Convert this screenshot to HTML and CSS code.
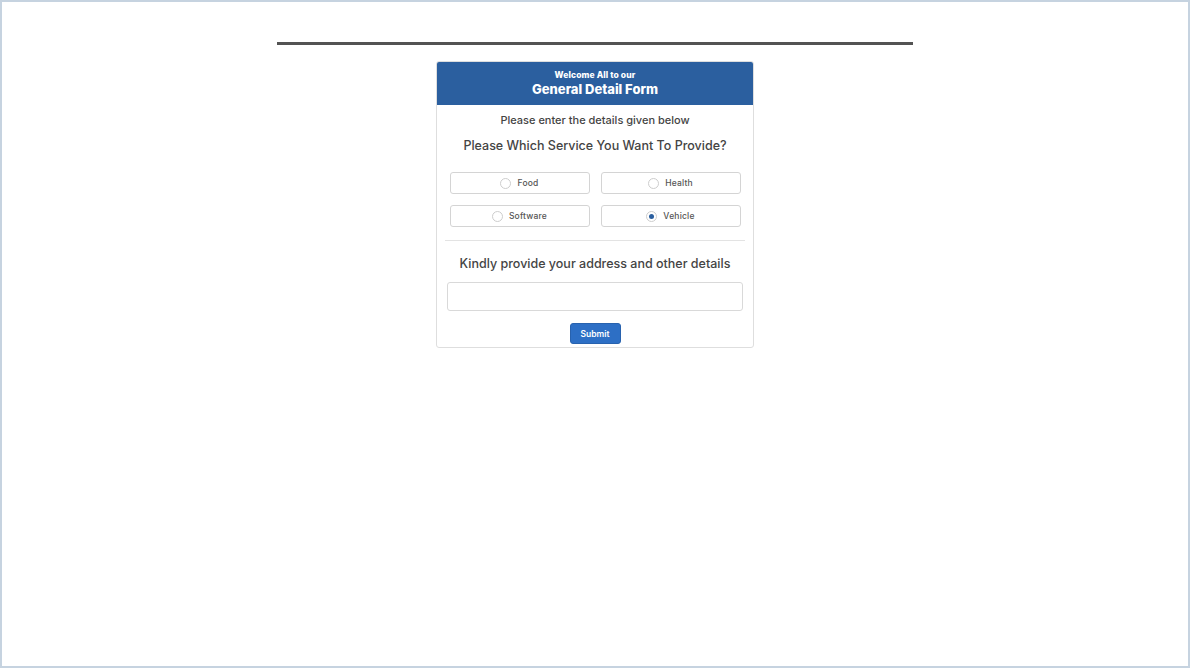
FILE: index.html
```html
<!DOCTYPE html>
<html lang="en">
<head>
<meta charset="utf-8">
<title>General Detail Form</title>
<link rel="stylesheet" href="styles.css">
</head>
<body>
<div class="frame">
  <div class="topline"></div>
  <form class="card">
    <div class="card-head">
      <div class="head-small">Welcome All to our</div>
      <div class="head-big">General Detail Form</div>
    </div>
    <div class="card-body">
      <p class="intro">Please enter the details given below</p>
      <p class="question">Please Which Service You Want To Provide?</p>
      <div class="options">
        <label class="option"><span class="radio"></span><span class="opt-label">Food</span></label>
        <label class="option"><span class="radio"></span><span class="opt-label">Health</span></label>
        <label class="option"><span class="radio"></span><span class="opt-label">Software</span></label>
        <label class="option"><span class="radio checked"></span><span class="opt-label">Vehicle</span></label>
      </div>
      <div class="divider"></div>
      <p class="question q2">Kindly provide your address and other details</p>
      <div class="field"></div>
      <div class="actions"><span class="submit">Submit</span></div>
    </div>
  </form>
</div>
</body>
</html>
```

FILE: styles.css
```css
html, body {
  margin: 0;
  padding: 0;
  background: #ffffff;
}
body {
  font-family: Inter, "Liberation Sans", Arial, sans-serif;
  color: #444;
}
.frame {
  box-sizing: border-box;
  width: 1190px;
  height: 668px;
  border: 2px solid #c6d3e0;
  background: #fff;
  padding-top: 40px;
  display: flex;
  flex-direction: column;
  align-items: center;
}
.topline {
  width: 636px;
  height: 3px;
  background: #535353;
}
.card {
  box-sizing: border-box;
  width: 318px;
  margin-top: 16px;
  border: 1px solid #dedede;
  border-radius: 3px;
  background: #fff;
  overflow: hidden;
}
.card-head {
  height: 43px;
  background: #2b5f9f;
  color: #fff;
  text-align: center;
  display: flex;
  flex-direction: column;
  justify-content: center;
  padding-top: 1px;
  box-sizing: border-box;
}
.head-small {
  font-size: 8.5px;
  font-weight: 800;
  line-height: 11px;
  letter-spacing: 0.1px;
}
.head-big {
  font-size: 13px;
  font-weight: 800;
  line-height: 17px;
}
.card-body {
  padding: 0 10px 3px 10px;
  display: flex;
  flex-direction: column;
  align-items: center;
}
.intro {
  margin: 7px 0 0;
  font-size: 11px;
  font-weight: 500;
  line-height: 16px;
  color: #444;
}
.question {
  margin: 9px 0 0;
  font-size: 12.5px;
  font-weight: 500;
  line-height: 18px;
  color: #444;
}
.options {
  margin-top: 17px;
  display: grid;
  grid-template-columns: 140px 140px;
  grid-auto-rows: 22px;
  column-gap: 11px;
  row-gap: 11px;
}
.option {
  box-sizing: border-box;
  border: 1px solid #d4d4d4;
  border-radius: 3px;
  display: flex;
  align-items: center;
  justify-content: center;
  gap: 6px;
  background: #fff;
}
.radio {
  box-sizing: border-box;
  width: 11px;
  height: 11px;
  border: 1px solid #cdcdcd;
  border-radius: 50%;
  display: flex;
  align-items: center;
  justify-content: center;
}
.radio.checked::after {
  content: "";
  width: 5px;
  height: 5px;
  border-radius: 50%;
  background: #2b5f9f;
}
.opt-label {
  font-size: 8.5px;
  font-weight: 500;
  color: #555;
  letter-spacing: 0.2px;
}
.divider {
  align-self: stretch;
  margin: 13px -2px 0;
  height: 1px;
  background: #e3e3e3;
}
.q2 {
  margin-top: 14px;
}
.field {
  box-sizing: border-box;
  width: 296px;
  height: 29px;
  margin-top: 9px;
  border: 1px solid #d9d9d9;
  border-radius: 3px;
  background: #fff;
}
.actions {
  margin-top: 12px;
  display: flex;
  justify-content: center;
}
.submit {
  box-sizing: border-box;
  width: 51px;
  height: 21px;
  background: #2d6fc5;
  border: 1px solid #2862ae;
  border-radius: 3px;
  color: #fff;
  font-size: 8.5px;
  font-weight: 600;
  display: flex;
  align-items: center;
  justify-content: center;
}
```
